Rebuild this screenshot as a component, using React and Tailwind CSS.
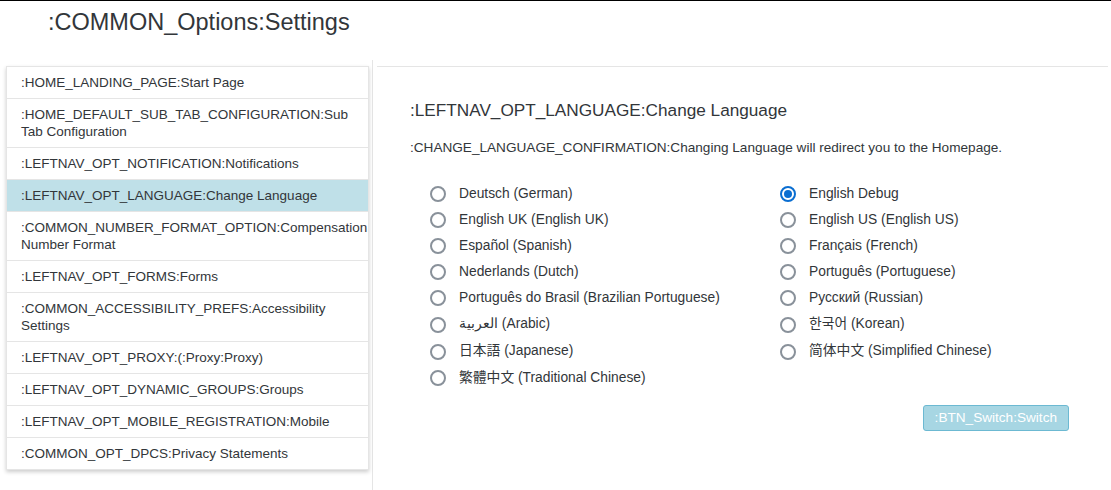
import React from "react";

const nav = [
  ":HOME_LANDING_PAGE:Start Page",
  ":HOME_DEFAULT_SUB_TAB_CONFIGURATION:Sub Tab Configuration",
  ":LEFTNAV_OPT_NOTIFICATION:Notifications",
  ":LEFTNAV_OPT_LANGUAGE:Change Language",
  ":COMMON_NUMBER_FORMAT_OPTION:Compensation Number Format",
  ":LEFTNAV_OPT_FORMS:Forms",
  ":COMMON_ACCESSIBILITY_PREFS:Accessibility Settings",
  ":LEFTNAV_OPT_PROXY:(:Proxy:Proxy)",
  ":LEFTNAV_OPT_DYNAMIC_GROUPS:Groups",
  ":LEFTNAV_OPT_MOBILE_REGISTRATION:Mobile",
  ":COMMON_OPT_DPCS:Privacy Statements",
];

const col1 = [
  ["Deutsch (German)", 26],
  ["English UK (English UK)", 26],
  ["Español (Spanish)", 26],
  ["Nederlands (Dutch)", 26],
  ["Português do Brasil (Brazilian Portuguese)", 26],
  ["العربية (Arabic)", 27],
  ["日本語 (Japanese)", 27],
  ["繁體中文 (Traditional Chinese)", 26],
];
const col2 = [
  ["English Debug", 26],
  ["English US (English US)", 26],
  ["Français (French)", 26],
  ["Português (Portuguese)", 26],
  ["Русский (Russian)", 26],
  ["한국어 (Korean)", 27],
  ["简体中文 (Simplified Chinese)", 27],
];

function Radio({ label, checked, tall }) {
  return (
    <div className={"flex items-center " + (tall ? "h-[27px]" : "h-[26px]")}>
      <span
        className={
          "w-[16px] h-[16px] rounded-full border-2 flex items-center justify-center ml-[20px] mr-[13px] bg-white " +
          (checked ? "border-[#0a6ed1]" : "border-[#89919a]")
        }
      >
        {checked && <span className="w-[8px] h-[8px] rounded-full bg-[#0a6ed1]" />}
      </span>
      <span className="text-[13.8px] text-[#32363a]">{label}</span>
    </div>
  );
}

export default function App() {
  return (
    <div
      className="w-[1111px] h-[490px] bg-white border-t border-black overflow-hidden"
      style={{ fontFamily: '"Liberation Sans", "Noto Sans CJK JP", sans-serif' }}
    >
      <div className="pl-[48px] pt-[6px] h-[59px] text-[23.5px] text-[#32363a] leading-[30px]">
        :COMMON_Options:Settings
      </div>
      <div className="flex">
        <div className="w-[373px] shrink-0 border-r border-[#e5e5e5] pl-[6px] pt-[6px] h-[431px]">
          <div className="w-[363px] bg-white border border-[#e5e5e5] shadow-[0_2px_4px_rgba(0,0,0,0.2)] overflow-hidden">
            {nav.map((t, i) => (
              <div
                key={i}
                className={
                  "pl-[14px] pr-[12px] py-[7px] text-[13.5px] leading-[17px] text-[#32363a] border-b border-[#e5e5e5] last:border-b-0 " +
                  (i === 3 ? "bg-[#bfe0e8]" : "")
                }
              >
                {t}
              </div>
            ))}
          </div>
        </div>
        <div className="flex-1 pl-[4px] pt-[6px]">
          <div className="border-t border-[#e5e5e5] w-[731px] pl-[33px] pr-[39px]">
            <div className="pt-[31px] text-[17.2px] text-[#32363a] leading-[24px]">
              :LEFTNAV_OPT_LANGUAGE:Change Language
            </div>
            <div className="pt-[17px] text-[13.6px] text-[#32363a] leading-[18px]">
              :CHANGE_LANGUAGE_CONFIRMATION:Changing Language will redirect you to the Homepage.
            </div>
            <div className="grid grid-cols-[350px_1fr] pt-[24px]">
              <div className="flex flex-col">
                {col1.map(([l, h]) => (
                  <Radio key={l} label={l} tall={h === 27} />
                ))}
              </div>
              <div className="flex flex-col">
                {col2.map(([l, h], i) => (
                  <Radio key={l} label={l} checked={i === 0} tall={h === 27} />
                ))}
              </div>
            </div>
            <div className="flex justify-end pt-[14px]">
              <button className="h-[26px] px-[11px] rounded-[3px] bg-[#a7d6e3] border border-[#6cb9d2] text-white text-[13.6px]">
                :BTN_Switch:Switch
              </button>
            </div>
          </div>
        </div>
      </div>
    </div>
  );
}
